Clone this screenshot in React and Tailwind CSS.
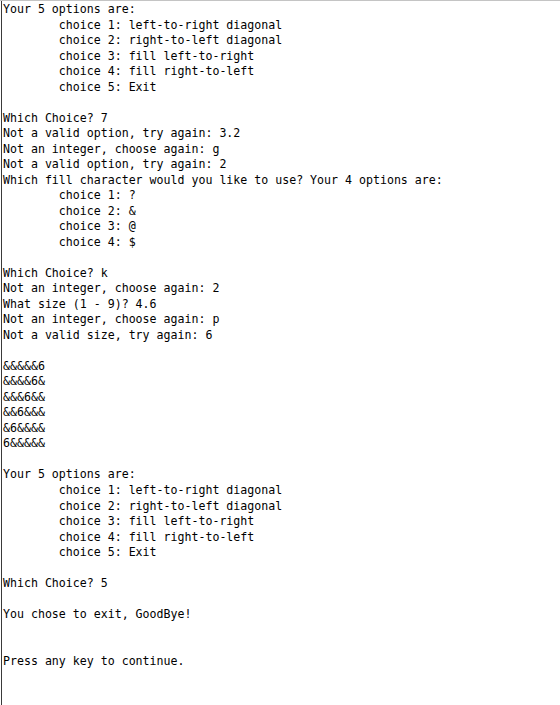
import React from 'react';

const menu = [
  'Your 5 options are:',
  '\tchoice 1: left-to-right diagonal',
  '\tchoice 2: right-to-left diagonal',
  '\tchoice 3: fill left-to-right',
  '\tchoice 4: fill right-to-left',
  '\tchoice 5: Exit',
];

const lines = [
  ...menu,
  '',
  'Which Choice? 7',
  'Not a valid option, try again: 3.2',
  'Not an integer, choose again: g',
  'Not a valid option, try again: 2',
  'Which fill character would you like to use? Your 4 options are:',
  '\tchoice 1: ?',
  '\tchoice 2: &',
  '\tchoice 3: @',
  '\tchoice 4: $',
  '',
  'Which Choice? k',
  'Not an integer, choose again: 2',
  'What size (1 - 9)? 4.6',
  'Not an integer, choose again: p',
  'Not a valid size, try again: 6',
  '',
  '&&&&&6',
  '&&&&6&',
  '&&&6&&',
  '&&6&&&',
  '&6&&&&',
  '6&&&&&',
  '',
  ...menu,
  '',
  'Which Choice? 5',
  '',
  'You chose to exit, GoodBye!',
  '',
  '',
  'Press any key to continue.',
];

const App = () => {
  return (
    <div className="w-[560px] h-[705px] bg-white border-t border-[#c4c4c4] overflow-hidden">
      <div className="ml-px h-full border-l border-[#3a3a3a] pl-px">
        <pre className="font-['DejaVu_Sans_Mono',monospace] text-[11.6px] leading-[15.53px] text-black [tab-size:8] pt-px">
          {lines.map((l, i) => (
            <div key={i} className="h-[15.53px]">{l}</div>
          ))}
        </pre>
      </div>
    </div>
  );
};

export default App;
